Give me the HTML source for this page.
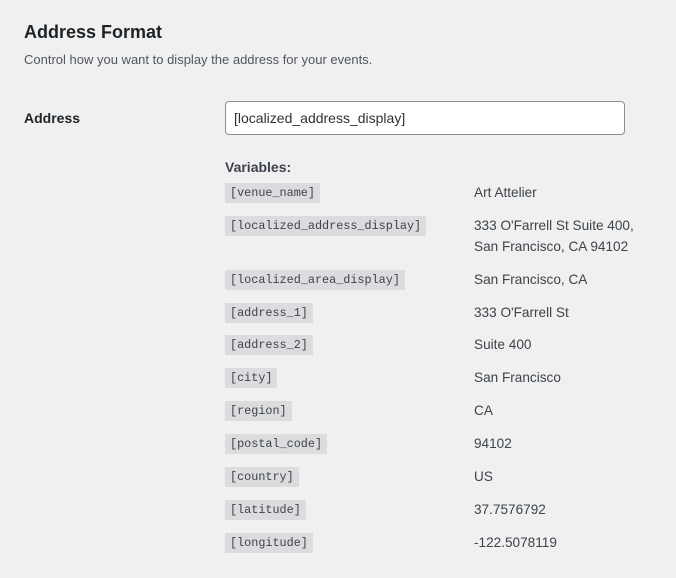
<!DOCTYPE html>
<html><head><meta charset="utf-8"><style>
body{margin:0;width:676px;height:578px;background:#f0f0f1;font-family:"Liberation Sans",sans-serif;color:#3c434a;position:relative;overflow:hidden}
.a{position:absolute;white-space:nowrap}
h2{position:absolute;left:24px;top:22px;margin:0;font-size:18px;font-weight:bold;color:#1d2327}
.desc{left:24px;top:52px;font-size:13px;color:#50575e}
.lbl{left:24px;top:110px;font-size:14px;font-weight:bold;color:#1d2327}
.inp{position:absolute;left:225px;top:101px;width:390px;height:32px;background:#fff;border:1px solid #8c8f94;border-radius:4px;font-size:14px;line-height:32px;padding-left:8px;color:#2c3338}
.var{left:225px;top:159px;font-size:14px;font-weight:bold;color:#3c434a}
code{position:absolute;left:225px;height:20px;line-height:20px;padding:0 5px;background:#dcdcde;font-family:"Liberation Mono",monospace;font-size:11.8px;color:#3c434a;white-space:nowrap}
.v{position:absolute;left:474px;font-size:13.6px;line-height:21px;color:#3c434a;white-space:nowrap}
</style></head><body>
<h2>Address Format</h2>
<div class="a desc">Control how you want to display the address for your events.</div>
<div class="a lbl">Address</div>
<div class="inp">[localized_address_display]</div>
<div class="a var">Variables:</div>
<code style="top:183px">[venue_name]</code><div class="v" style="top:182px">Art Attelier</div>
<code style="top:216px">[localized_address_display]</code><div class="v" style="top:215px">333 O'Farrell St Suite 400,<br>San Francisco, CA 94102</div>
<code style="top:270px">[localized_area_display]</code><div class="v" style="top:269px">San Francisco, CA</div>
<code style="top:303px">[address_1]</code><div class="v" style="top:302px">333 O'Farrell St</div>
<code style="top:335px">[address_2]</code><div class="v" style="top:334px">Suite 400</div>
<code style="top:368px">[city]</code><div class="v" style="top:367px">San Francisco</div>
<code style="top:401px">[region]</code><div class="v" style="top:400px">CA</div>
<code style="top:434px">[postal_code]</code><div class="v" style="top:433px">94102</div>
<code style="top:467px">[country]</code><div class="v" style="top:466px">US</div>
<code style="top:500px">[latitude]</code><div class="v" style="top:499px">37.7576792</div>
<code style="top:533px">[longitude]</code><div class="v" style="top:532px">-122.5078119</div>
</body></html>
